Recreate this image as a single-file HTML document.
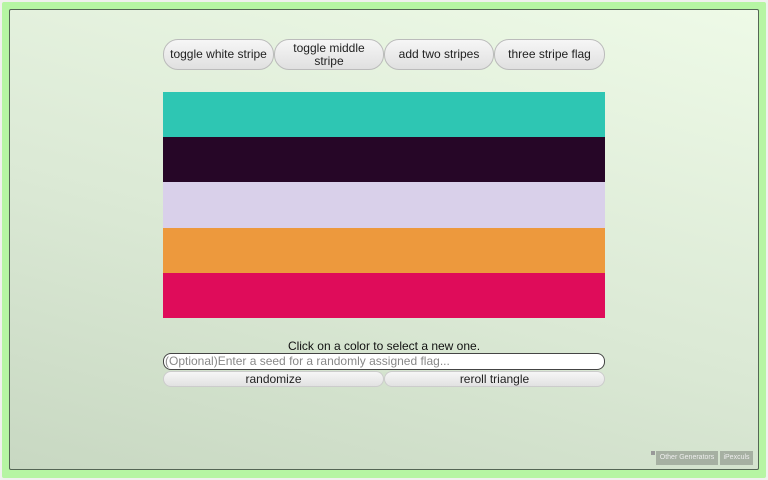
<!DOCTYPE html><html><head><style>
body{margin:0;width:768px;height:480px;background:#f0f0ee;font-family:"Liberation Sans",sans-serif;overflow:hidden}
.outer{position:absolute;left:2px;top:2px;width:764px;height:476px;background:#b6f5a3;border-radius:2px}
.inner{position:absolute;left:9px;top:9px;width:748px;height:459px;border:1px solid #556655;border-radius:2px;background:linear-gradient(15deg,#c8d8c2 0%,#dbe9d5 45%,#eefae7 100%)}
.btn{position:absolute;top:39px;height:31px;border:1px solid #bbb;border-radius:15px;background:linear-gradient(#f6f6f6,#e0e0e0);font-size:12px;color:#222;display:flex;align-items:center;justify-content:center;text-align:center;line-height:13px;box-sizing:border-box}
.s{position:absolute;left:163px;width:442px}
.b2{position:absolute;top:371px;height:16px;border:1px solid #ccc;border-radius:8px;background:linear-gradient(#f6f6f6,#e2e2e2);font-size:12px;color:#222;text-align:center;line-height:15px;box-sizing:border-box}
.tag{position:absolute;top:451px;height:14px;background:#a6b0a2;color:#eee;font-size:7px;line-height:14px;text-align:center;white-space:nowrap;overflow:hidden}
</style></head><body>
<div class="outer"></div><div class="inner"></div>
<div class="btn" style="left:163px;width:111px">toggle white stripe</div>
<div class="btn" style="left:274px;width:110px">toggle middle<br>stripe</div>
<div class="btn" style="left:384px;width:110px">add two stripes</div>
<div class="btn" style="left:494px;width:111px">three stripe flag</div>
<div class="s" style="top:92px;height:45px;background:#2ec6b3"></div>
<div class="s" style="top:137px;height:45px;background:#260627"></div>
<div class="s" style="top:182px;height:46px;background:#d9d0ea"></div>
<div class="s" style="top:228px;height:45px;background:#ed993d"></div>
<div class="s" style="top:273px;height:45px;background:#df0c5a"></div>
<div style="position:absolute;left:163px;width:442px;top:339px;text-align:center;font-size:12px;color:#111">Click on a color to select a new one.</div>
<div style="position:absolute;left:163px;top:353px;width:442px;height:17px;box-sizing:border-box;border:1px solid #444;border-radius:8px;background:#fff;font-size:12px;color:#888;line-height:15px;padding-left:1px;white-space:nowrap">(Optional)Enter a seed for a randomly assigned flag...</div>
<div class="b2" style="left:163px;width:221px">randomize</div>
<div class="b2" style="left:384px;width:221px">reroll triangle</div>
<div style="position:absolute;left:651px;top:451px;width:4px;height:4px;background:#999"></div>
<div class="tag" style="left:656px;width:62px">Other Generators</div>
<div class="tag" style="left:720px;width:33px">iPexculs</div>
</body></html>
